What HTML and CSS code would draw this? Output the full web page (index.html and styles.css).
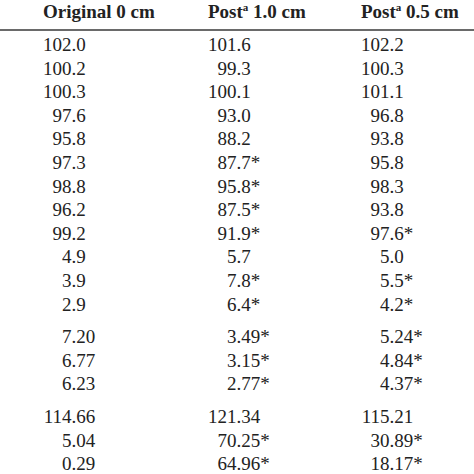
FILE: index.html
```html
<!DOCTYPE html>
<html>
<head>
<meta charset="utf-8">
<link rel="stylesheet" href="styles.css">
</head>
<body>
<div class="table">
  <div class="head">
    <div class="th">Original 0 cm</div>
    <div class="th">Post<sup class="sup">a</sup> 1.0 cm</div>
    <div class="th">Post<sup class="sup">a</sup> 0.5 cm</div>
  </div>
  <div class="body">
    <div class="row first"><div class="td"><span class="i">102</span>.0</div><div class="td"><span class="i">101</span>.6</div><div class="td"><span class="i">102</span>.2</div></div>
    <div class="row"><div class="td"><span class="i">100</span>.2</div><div class="td"><span class="i">99</span>.3</div><div class="td"><span class="i">100</span>.3</div></div>
    <div class="row"><div class="td"><span class="i">100</span>.3</div><div class="td"><span class="i">100</span>.1</div><div class="td"><span class="i">101</span>.1</div></div>
    <div class="row"><div class="td"><span class="i">97</span>.6</div><div class="td"><span class="i">93</span>.0</div><div class="td"><span class="i">96</span>.8</div></div>
    <div class="row"><div class="td"><span class="i">95</span>.8</div><div class="td"><span class="i">88</span>.2</div><div class="td"><span class="i">93</span>.8</div></div>
    <div class="row"><div class="td"><span class="i">97</span>.3</div><div class="td"><span class="i">87</span>.7*</div><div class="td"><span class="i">95</span>.8</div></div>
    <div class="row"><div class="td"><span class="i">98</span>.8</div><div class="td"><span class="i">95</span>.8*</div><div class="td"><span class="i">98</span>.3</div></div>
    <div class="row"><div class="td"><span class="i">96</span>.2</div><div class="td"><span class="i">87</span>.5*</div><div class="td"><span class="i">93</span>.8</div></div>
    <div class="row"><div class="td"><span class="i">99</span>.2</div><div class="td"><span class="i">91</span>.9*</div><div class="td"><span class="i">97</span>.6*</div></div>
    <div class="row"><div class="td"><span class="i">4</span>.9</div><div class="td"><span class="i">5</span>.7</div><div class="td"><span class="i">5</span>.0</div></div>
    <div class="row"><div class="td"><span class="i">3</span>.9</div><div class="td"><span class="i">7</span>.8*</div><div class="td"><span class="i">5</span>.5*</div></div>
    <div class="row"><div class="td"><span class="i">2</span>.9</div><div class="td"><span class="i">6</span>.4*</div><div class="td"><span class="i">4</span>.2*</div></div>
    <div class="row group"><div class="td"><span class="i">7</span>.20</div><div class="td"><span class="i">3</span>.49*</div><div class="td"><span class="i">5</span>.24*</div></div>
    <div class="row"><div class="td"><span class="i">6</span>.77</div><div class="td"><span class="i">3</span>.15*</div><div class="td"><span class="i">4</span>.84*</div></div>
    <div class="row"><div class="td"><span class="i">6</span>.23</div><div class="td"><span class="i">2</span>.77*</div><div class="td"><span class="i">4</span>.37*</div></div>
    <div class="row group"><div class="td"><span class="i">114</span>.66</div><div class="td"><span class="i">121</span>.34</div><div class="td"><span class="i">115</span>.21</div></div>
    <div class="row"><div class="td"><span class="i">5</span>.04</div><div class="td"><span class="i">70</span>.25*</div><div class="td"><span class="i">30</span>.89*</div></div>
    <div class="row"><div class="td"><span class="i">0</span>.29</div><div class="td"><span class="i">64</span>.96*</div><div class="td"><span class="i">18</span>.17*</div></div>
  </div>
</div>
</body>
</html>
```

FILE: styles.css
```css
html, body {
  margin: 0;
  padding: 0;
  background: #ffffff;
}

.table {
  font-family: "Liberation Serif", "Times New Roman", serif;
  font-size: 19px;
  color: #222222;
  width: 474px;
}

.head {
  display: grid;
  grid-template-columns: 165px 153px 1fr;
  padding-left: 43px;
  height: 29px;
  line-height: 23.5px;
  border-bottom: 2px solid #6a6a6a;
  font-weight: bold;
}

.th {
  white-space: nowrap;
}

.sup {
  font-size: 11px;
  line-height: 0;
  vertical-align: 7px;
}

.body {
  padding-top: 2px;
}

.row {
  display: grid;
  grid-template-columns: 165px 153px 1fr;
  padding-left: 43px;
  height: 23.6px;
  line-height: 23.6px;
}

.row.group {
  margin-top: 9px;
}

.td {
  white-space: nowrap;
}

.i {
  display: inline-block;
  width: 1.5em;
  text-align: right;
}
```
